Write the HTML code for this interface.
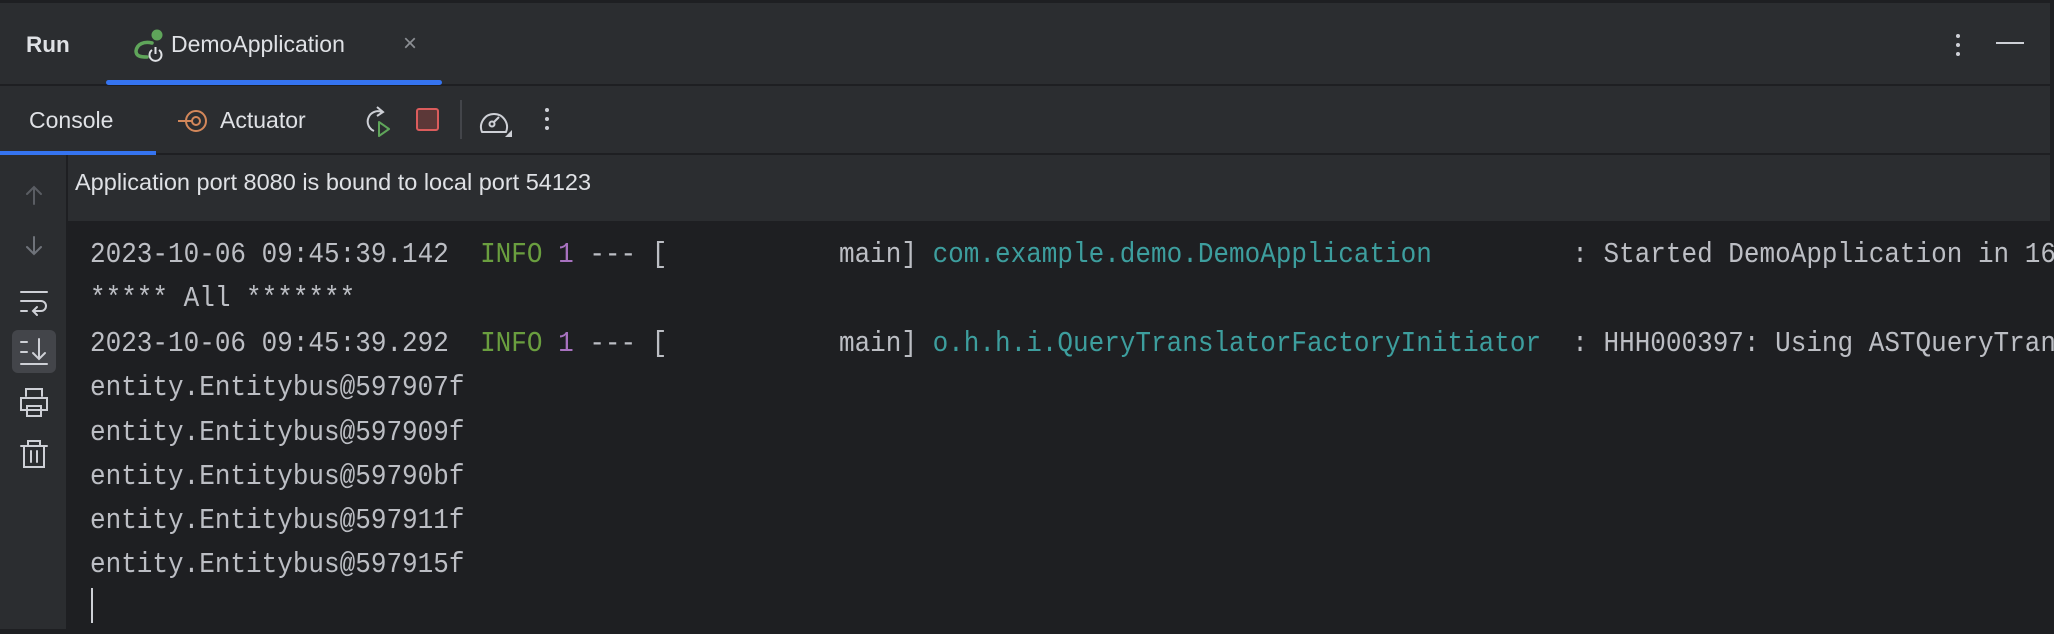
<!DOCTYPE html>
<html><head><meta charset="utf-8"><style>
*{margin:0;padding:0;box-sizing:border-box}
body{width:2054px;height:634px;background:#1e1f22;position:relative;overflow:hidden;font-family:"Liberation Sans",sans-serif;color:#dfe1e5}
.abs{position:absolute}
#hdr{left:0;top:3px;width:2050px;height:81px;background:#2b2d30}
#tb{left:0;top:86px;width:2050px;height:67px;background:#2b2d30}
#side{left:0;top:155px;width:66px;height:474px;background:#2b2d30}
#info{left:68px;top:155px;width:1982px;height:66px;background:#2b2d30}
#con{left:68px;top:222px;width:1982px;height:407px;background:#1e1f22}
.mono{font-family:"Liberation Mono",monospace;font-size:26px;color:#bcbec4;white-space:pre;letter-spacing:0px;transform:scaleY(1.12);transform-origin:left center;line-height:30px}
.g{color:#6a9e3f}.p{color:#a872c0}.c{color:#3d9e9e}
</style></head><body>
<div class="abs" id="hdr"></div>
<div class="abs" id="tb"></div>
<div class="abs" id="side"></div>
<div class="abs" id="info"></div>
<div class="abs" id="con"></div>

<div class="abs" style="left:26px;top:32px;font-size:22.5px;font-weight:bold;color:#dfe1e5">Run</div>
<svg class="abs" style="left:128px;top:22px" width="42" height="42" viewBox="0 0 42 42">
<circle cx="29" cy="13" r="5.5" fill="#5fa55a"/>
<path d="M24 21 C16 19 9 22 8 29 C8 34 12 35 19 35" fill="none" stroke="#5fa55a" stroke-width="3.5" stroke-linecap="round"/>
<path d="M24 28 A6 6 0 1 0 31 28" fill="none" stroke="#dfe1e5" stroke-width="2"/>
<line x1="27.5" y1="25" x2="27.5" y2="32" stroke="#dfe1e5" stroke-width="2"/>
</svg>
<div class="abs" style="left:171px;top:31px;font-size:23px;color:#dfe1e5">DemoApplication</div>
<div class="abs" style="left:403px;top:30px;font-size:24px;color:#8c8f94">×</div>
<div class="abs" style="left:106px;top:80px;width:336px;height:5px;border-radius:3px;background:#3574f0"></div>
<div class="abs" style="left:1956px;top:34px;width:4px;height:4px;border-radius:2px;background:#ced0d6;box-shadow:0 9px 0 #ced0d6,0 18px 0 #ced0d6"></div>
<div class="abs" style="left:1996px;top:42px;width:28px;height:2px;background:#ced0d6"></div>

<div class="abs" style="left:29px;top:107px;font-size:23px;color:#dfe1e5">Console</div>
<div class="abs" style="left:0;top:151px;width:156px;height:4px;background:#3574f0"></div>
<svg class="abs" style="left:176px;top:104px" width="34" height="34" viewBox="0 0 34 34">
<circle cx="20" cy="17" r="10" fill="none" stroke="#d3875a" stroke-width="2"/>
<circle cx="20" cy="17" r="4" fill="none" stroke="#d3875a" stroke-width="2"/>
<line x1="2" y1="17" x2="16" y2="17" stroke="#d3875a" stroke-width="2"/>
</svg>
<div class="abs" style="left:220px;top:107px;font-size:23px;color:#dfe1e5">Actuator</div>
<svg class="abs" style="left:360px;top:104px" width="36" height="36" viewBox="0 0 36 36">
<path d="M22 8 A10 10 0 1 0 14 27" fill="none" stroke="#ced0d6" stroke-width="2"/>
<path d="M17 3 L23 8 L17 12" fill="none" stroke="#ced0d6" stroke-width="2"/>
<path d="M19 18 L29 25 L19 32 Z" fill="none" stroke="#5fa55a" stroke-width="2" stroke-linejoin="round"/>
</svg>
<div class="abs" style="left:416px;top:108px;width:23px;height:23px;border:2px solid #db5c5c;border-radius:3px;background:#5c3838"></div>
<div class="abs" style="left:460px;top:100px;width:2px;height:39px;background:#43454a"></div>
<svg class="abs" style="left:476px;top:104px" width="38" height="34" viewBox="0 0 38 34">
<path d="M6 28 A13 13 0 1 1 30 28 Z" fill="none" stroke="#ced0d6" stroke-width="2" stroke-linejoin="round"/>
<circle cx="16" cy="20" r="2.5" fill="none" stroke="#ced0d6" stroke-width="2"/>
<line x1="18" y1="18" x2="23" y2="13" stroke="#ced0d6" stroke-width="2"/>
<path d="M29 33 L36 33 L36 26 Z" fill="#ced0d6"/>
</svg>
<div class="abs" style="left:545px;top:108px;width:4px;height:4px;border-radius:2px;background:#ced0d6;box-shadow:0 9px 0 #ced0d6,0 18px 0 #ced0d6"></div>

<div class="abs" style="left:75px;top:169px;font-size:23.5px;color:#dfe1e5">Application port 8080 is bound to local port 54123</div>

<svg class="abs" style="left:0;top:170px" width="66" height="310" viewBox="0 0 66 310">
<g fill="none" stroke-width="2" stroke-linecap="round">
<path d="M34 17 V34 M27 24 L34 17 L41 24" stroke="#5a5d63"/>
<path d="M34 67 V84 M27 77 L34 84 L41 77" stroke="#6f737a"/>
<path d="M21 122 H47 M21 131 H41 A5 5 0 0 1 41 141 H34 M37 137 L33 141 L37 145 M21 141 H27" stroke="#ced0d6"/>
</g>
<rect x="12" y="160" width="44" height="43" rx="6" fill="#43454a"/>
<g fill="none" stroke-width="2" stroke-linecap="round" stroke="#ced0d6">
<path d="M21 172 H27 M21 182 H27 M21 194 H47 M39 169 V189 M33 183 L39 189 L45 183"/>
<path d="M26 226 V219 H42 V226 M21 228 H47 V240 H21 Z M27 236 H41 V246 H27 Z"/>
<path d="M21 276 H47 M28 276 V271 H40 V276 M24 276 V297 H44 V276 M31 281 V292 M37 281 V292"/>
</g>
</svg>

<div class="abs mono" style="left:90px;top:239px">2023-10-06 09:45:39.142  <span class="g">INFO</span> <span class="p">1</span> --- [           main] <span class="c">com.example.demo.DemoApplication</span>         : Started DemoApplication in 16</div>
<div class="abs mono" style="left:90px;top:283px">***** All *******</div>
<div class="abs mono" style="left:90px;top:328px">2023-10-06 09:45:39.292  <span class="g">INFO</span> <span class="p">1</span> --- [           main] <span class="c">o.h.h.i.QueryTranslatorFactoryInitiator</span>  : HHH000397: Using ASTQueryTran</div>
<div class="abs mono" style="left:90px;top:372px">entity.Entitybus@597907f</div>
<div class="abs mono" style="left:90px;top:417px">entity.Entitybus@597909f</div>
<div class="abs mono" style="left:90px;top:461px">entity.Entitybus@59790bf</div>
<div class="abs mono" style="left:90px;top:505px">entity.Entitybus@597911f</div>
<div class="abs mono" style="left:90px;top:549px">entity.Entitybus@597915f</div>
<div class="abs" style="left:91px;top:588px;width:2px;height:35px;background:#ced0d6"></div>
</body></html>
